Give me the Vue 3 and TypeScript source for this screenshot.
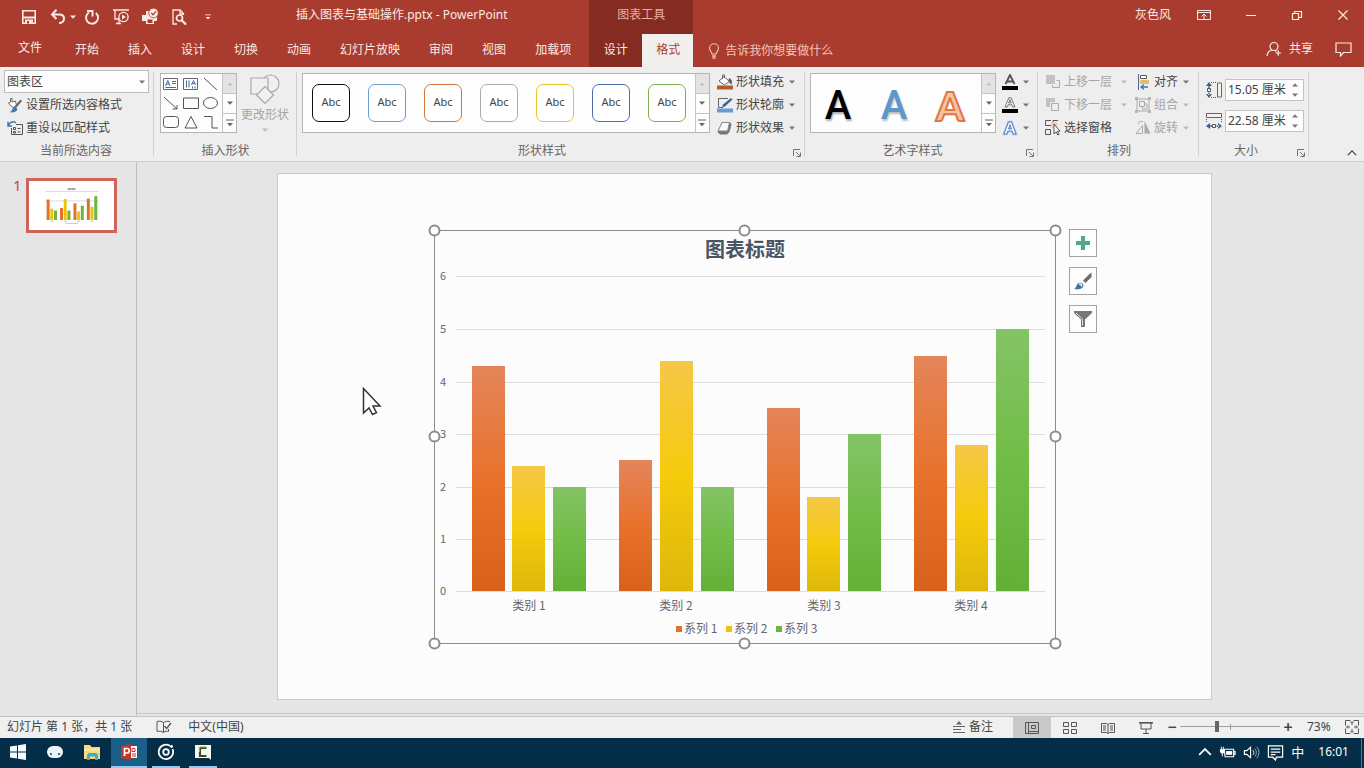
<script setup lang="ts">
import { computed, ref } from 'vue'

interface Series {
  name: string
  values: number[]
  fill: string
  swatch: string
}

const tabs = ['开始', '插入', '设计', '切换', '动画', '幻灯片放映', '审阅', '视图', '加载项']
const quickActions = [
  { id: 'save', label: '保存' },
  { id: 'undo', label: '撤消' },
  { id: 'redo', label: '恢复' },
  { id: 'present', label: '从头开始' },
  { id: 'print', label: '快速打印' },
  { id: 'preview', label: '打印预览' },
]
const shapes = ['textbox', 'vtextbox', 'line', 'arrow', 'rect', 'oval', 'rrect', 'triangle', 'elbow']
const outlines = ['black', 'blue', 'orange', 'gray', 'yellow', 'navy', 'green']
const shapeCommands = [
  { id: 'fill', label: '形状填充' },
  { id: 'outline', label: '形状轮廓' },
  { id: 'effect', label: '形状效果' },
]
const textCommands = [
  { id: 'textfill', label: '文本填充' },
  { id: 'textoutline', label: '文本轮廓' },
  { id: 'texteffect', label: '文本效果' },
]
const orderCommands = [
  { id: 'forward', label: '上移一层', off: true, caret: true },
  { id: 'backward', label: '下移一层', off: true, caret: true },
  { id: 'pane', label: '选择窗格', off: false, caret: false },
]
const alignCommands = [
  { id: 'align', label: '对齐', off: false },
  { id: 'group', label: '组合', off: true },
  { id: 'rotate', label: '旋转', off: true },
]
const views = [
  { id: 'normal', label: '普通视图' },
  { id: 'sorter', label: '幻灯片浏览' },
  { id: 'reading', label: '阅读视图' },
  { id: 'show', label: '幻灯片放映' },
]
const apps = [
  { id: 'windows', label: '开始', state: '' },
  { id: 'cloud', label: '网盘', state: '' },
  { id: 'folder', label: '文件资源管理器', state: '' },
  { id: 'ppt', label: 'PowerPoint', state: 'active' },
  { id: 'disc', label: '录音', state: 'running' },
  { id: 'camtasia', label: 'Camtasia', state: 'running' },
]
const tray = ['chevron', 'battery', 'speaker', 'notice']

const element = ref('图表区')
const shapeHeight = ref('15.05 厘米')
const shapeWidth = ref('22.58 厘米')
const zoom = ref(36)
const view = ref('normal')

const categories = ['类别 1', '类别 2', '类别 3', '类别 4']
const firstBar = 37.6
const groupPitch = 147.45
const barPitch = 40.8
const barWidth = 33
const baseline = 361
const unit = 52.4
const series: Series[] = [
  { name: '系列 1', values: [4.3, 2.5, 3.5, 4.5], fill: 'url(#g-orange)', swatch: '#e2702f' },
  { name: '系列 2', values: [2.4, 4.4, 1.8, 2.8], fill: 'url(#g-yellow)', swatch: '#ecc40c' },
  { name: '系列 3', values: [2, 2, 3, 5], fill: 'url(#g-green)', swatch: '#6cb540' },
]
const ticks = [0, 1, 2, 3, 4, 5, 6].map((value) => ({ value, y: Math.ceil(baseline - value * unit) - (value === 6 ? 1 : 0) }))
const bars = computed(() =>
  series.flatMap((s, n) =>
    s.values.map((v, i) => {
      const y = Math.ceil(baseline - v * unit)
      const x = Math.round(firstBar + i * groupPitch + n * barPitch)
      return { key: `${s.name}-${i}`, x, y, h: baseline - y, fill: s.fill, flat: s.swatch }
    }),
  ),
)
const labelX = (i: number) => Math.round(firstBar + i * groupPitch + 57)
const handles = [
  [0, 0], [310, 0], [621, 0], [0, 206], [621, 206], [0, 413], [310, 413], [621, 413],
]
</script>

<template>
  <svg class="sprite" aria-hidden="true">
    <linearGradient id="g-orange" x1="0" y1="0" x2="0" y2="1">
      <stop offset="0" stop-color="#e4855a" /><stop offset=".5" stop-color="#e8722c" /><stop offset="1" stop-color="#d8621b" />
    </linearGradient>
    <linearGradient id="g-yellow" x1="0" y1="0" x2="0" y2="1">
      <stop offset="0" stop-color="#f5c747" /><stop offset=".5" stop-color="#f5cb0c" /><stop offset="1" stop-color="#deb70b" />
    </linearGradient>
    <linearGradient id="g-green" x1="0" y1="0" x2="0" y2="1">
      <stop offset="0" stop-color="#84c366" /><stop offset=".5" stop-color="#72bd48" /><stop offset="1" stop-color="#63af37" />
    </linearGradient>

    <symbol id="i-save" viewBox="0 0 18 18"><path d="M2.800 2.800h12.400v12.400H2.800z" fill="none" stroke="currentColor" stroke-width="1.600" /><path d="M3 8.500h12v2H3zM5 11.500h8v4H5z" fill="currentColor" /><path d="M7 13h2v2.500H7z" fill="#a93c2e" /></symbol>
    <symbol id="i-undo" viewBox="0 0 18 18"><path d="M3 6.500h7c3 0 5 1.500 5 4s-2 4.500-5 4.500M7.500 1.800L3 6.500l4.500 4.500" fill="none" stroke="currentColor" stroke-width="2" /></symbol>
    <symbol id="i-redo" viewBox="0 0 18 18"><path d="M6 4.500A6 6 0 1 0 12.800 5M4 3h5.500v5.500" fill="none" stroke="currentColor" stroke-width="1.900" /></symbol>
    <symbol id="i-present" viewBox="0 0 18 18"><path d="M1 2h16M3 2v9h4M4 15.500h5M7 11v4" fill="none" stroke="currentColor" stroke-width="1.300" /><circle cx="11.500" cy="9" r="4.600" fill="none" stroke="currentColor" stroke-width="1.300" /><path d="M10 6.500l4 2.500-4 2.500z" fill="currentColor" /></symbol>
    <symbol id="i-print" viewBox="0 0 18 18"><path d="M1 7h4V3h4v4h7v6h-3v3H5v-3H1z" fill="currentColor" /><path d="M6.500 11.500h5V15h-5z" fill="#a93c2e" /><circle cx="12.500" cy="5" r="4.800" fill="currentColor" stroke="#a93c2e" stroke-width=".800" /><path d="M10.300 5l1.700 1.800 3-3.500" fill="none" stroke="#a93c2e" stroke-width="1.300" /></symbol>
    <symbol id="i-preview" viewBox="0 0 18 18"><path d="M7 16H3V2h7l3.500 3.500V7M10 2v4h3.500" fill="none" stroke="currentColor" stroke-width="1.300" /><circle cx="9.500" cy="10" r="3" fill="none" stroke="currentColor" stroke-width="1.700" /><path d="M11.500 12l4.500 4.500" stroke="currentColor" stroke-width="2.200" /></symbol>
    <symbol id="i-caret" viewBox="0 0 8 8"><path d="M1 2.500h6L4 5.800z" fill="currentColor" /></symbol>
    <symbol id="i-upcaret" viewBox="0 0 8 8"><path d="M1 5.500h6L4 2.200z" fill="currentColor" /></symbol>
    <symbol id="i-more" viewBox="0 0 8 8"><path d="M0 .5h8v1H0zM1 4h6L4 7.200z" fill="currentColor" /></symbol>
    <symbol id="i-launch" viewBox="0 0 8 8"><path d="M.5 7V.5H7M3 3l4 4M7.500 3.500v4h-4" fill="none" stroke="currentColor" /></symbol>
    <symbol id="i-bulb" viewBox="0 0 12 16"><path d="M4 11c0-2-2.500-3-2.500-5.700a4.500 4.500 0 0 1 9 0C10.500 8 8 9 8 11z" fill="none" stroke="currentColor" stroke-width="1.100" /><path d="M4 13h4M4.500 15h3" stroke="currentColor" stroke-width="1.300" /></symbol>
    <symbol id="i-ribbonopt" viewBox="0 0 14 12"><path d="M.5 1.500h13v9H.5zM.5 3.500h13M7 10V5.500M4.500 7.500L7 5l2.500 2.500" fill="none" stroke="currentColor" /></symbol>
    <symbol id="i-min" viewBox="0 0 12 12"><path d="M1 6.500h10" stroke="currentColor" /></symbol>
    <symbol id="i-restore" viewBox="0 0 12 12"><path d="M1.500 4.500h6v6h-6zM3.500 4.500v-2h7v6h-3" fill="none" stroke="currentColor" stroke-width="1.200" /></symbol>
    <symbol id="i-close" viewBox="0 0 12 12"><path d="M1.500 1.500l9 9M10.500 1.500l-9 9" stroke="currentColor" stroke-width="1.200" /></symbol>
    <symbol id="i-person" viewBox="0 0 16 16"><circle cx="8" cy="5.500" r="4" fill="none" stroke="currentColor" stroke-width="1.200" /><path d="M1 15c.5-3.500 2.500-5.500 5-6M9 9.500l1.500 1M9.500 12h5.500M12.300 9.300v5.500" fill="none" stroke="currentColor" stroke-width="1.200" /></symbol>
    <symbol id="i-comment" viewBox="0 0 17 15"><path d="M1 1h15v9.500H8.500L5.500 14v-3.500H1z" fill="none" stroke="currentColor" stroke-width="1.200" /></symbol>

    <symbol id="i-format" viewBox="0 0 16 16"><path d="M4.500 9.500L1.500 6l2-1V1.500h1.500V5l3.500-1 1 4.500-2.500 2z" fill="#fdfdfd" stroke="#666" /><path d="M13.500 2.500l1.500 1.500-6 7-2-1z" fill="#666" /><path d="M2.500 15c3 0 2.500-5 5.500-5l2.500 2C10 15 6 16 2.500 15z" fill="#3f7ab8" /></symbol>
    <symbol id="i-reset" viewBox="0 0 16 16"><path d="M4.500 8v6.500h11V4.500H9M6.500 7.500h2v2h-2zM6.500 11.500h2v1.500h-2zM10.500 8.500h3M10.500 12h3" fill="none" stroke="#555" /><path d="M1.500 6C2 2.500 6 .500 9 3M1 1.800V6h4" fill="none" stroke="#3f7ab8" stroke-width="1.500" /></symbol>

    <symbol id="i-textbox" viewBox="0 0 18 16"><path d="M1.500 2.500h14v11h-14z" fill="none" stroke="#666" /><path d="M3.500 10l2.300-5.500L8 10M4.300 8h3M10 5.500h4M10 7.500h4M3.500 11.500h10.500" fill="none" stroke="#456a98" /></symbol>
    <symbol id="i-vtextbox" viewBox="0 0 18 16"><path d="M1.500 2.500h14v11h-14z" fill="none" stroke="#666" /><path d="M9.500 9l2-4.500 2 4.500M10.300 7.500h2.500M4.500 4.500v7M7 4.500v7M10.500 10.500v2M13 10.500v2" fill="none" stroke="#456a98" /></symbol>
    <symbol id="i-line" viewBox="0 0 18 16"><path d="M2 2l13 12" stroke="#555" /></symbol>
    <symbol id="i-arrow" viewBox="0 0 18 16"><path d="M2 2l13 12M15 10v4h-4.500" fill="none" stroke="#555" /></symbol>
    <symbol id="i-rect" viewBox="0 0 18 16"><path d="M1.500 3h15v10.500h-15z" fill="none" stroke="#555" /></symbol>
    <symbol id="i-oval" viewBox="0 0 18 16"><ellipse cx="8.500" cy="8" rx="7" ry="5.500" fill="none" stroke="#555" /></symbol>
    <symbol id="i-rrect" viewBox="0 0 18 16"><rect x="1.500" y="2.500" width="15" height="11" rx="3" fill="none" stroke="#555" /></symbol>
    <symbol id="i-triangle" viewBox="0 0 18 16"><path d="M9 2.500l6 11.500H3z" fill="none" stroke="#555" /></symbol>
    <symbol id="i-elbow" viewBox="0 0 18 16"><path d="M2 2.500h8v11.500h6" fill="none" stroke="#555" /></symbol>
    <symbol id="i-change" viewBox="0 0 30 30"><g fill="#f0f0f0" stroke="#a9a9a9" stroke-width="1.200"><circle cx="20.500" cy="9.500" r="8.500" /><path d="M1 4h17v16H1z" /><path d="M15 12.500l8.500 8.500-8.500 8.500L6.500 21z" /></g></symbol>

    <symbol id="i-fill" viewBox="0 0 16 16"><path d="M7 2.500l5.500 5-5 3.500L2 7z" fill="#fff" stroke="#666" /><path d="M5.500 5V1h2v3" fill="none" stroke="#666" /><path d="M12 4.500c2.500.5 3 2.500 2.500 5.500-1.500-.5-2-2-2.500-3z" fill="#4b5f70" stroke="#555" stroke-width=".600" /><path d="M0 11.500h16v4H0z" fill="#b8592c" /></symbol>
    <symbol id="i-outline" viewBox="0 0 16 16"><path d="M11 1.500H1.500v9H6" fill="none" stroke="#666" /><path d="M14 1l1.500 1.500L8 9.500l-3 1 1-3z" fill="#44658a" /><path d="M0 11.500h16v4H0z" fill="#649bd2" /></symbol>
    <symbol id="i-effect" viewBox="0 0 16 16"><path d="M5 2h8l1.500 2.500-2 7.500-2.500 2.500H3L.500 12z" fill="#777" /><path d="M5 2.500h7.500l-2 8.500H1z" fill="#fafafa" stroke="#888" stroke-linejoin="round" /></symbol>
    <symbol id="i-textfill" viewBox="0 0 16 16"><path d="M3.500 10L8 1l4.500 9M5 7.500h6" fill="none" stroke="#555" stroke-width="1.900" /><path d="M0 12h16v4H0z" fill="#000" /></symbol>
    <symbol id="i-textoutline" viewBox="0 0 16 16"><path d="M3 10L6.800.8h2.400L13 10h-2.200l-.8-2.200H6L5.200 10zM6.600 6h2.800L8 2.500z" fill="#fff" stroke="#666" stroke-width=".900" /><path d="M0 12h16v4H0z" fill="#000" /></symbol>
    <symbol id="i-texteffect" viewBox="0 0 16 16"><path d="M2 14L6.500 2h3L14 14h-2.800l-1-3H5.800l-1 3zM6.500 9h3L8 4.500z" fill="#f7fbff" stroke="#9fc3ee" stroke-width="2.400" /><path d="M2 14L6.500 2h3L14 14h-2.800l-1-3H5.800l-1 3zM6.500 9h3L8 4.500z" fill="#fff" stroke="#4a78b5" stroke-width=".900" /></symbol>

    <symbol id="i-forward" viewBox="0 0 16 16"><path d="M1 1h9v9H1z" fill="#c2c2c2" /><path d="M11.500 6.500h3v7h-7V11" fill="none" stroke="#aaa" /></symbol>
    <symbol id="i-backward" viewBox="0 0 16 16"><path d="M1 1h9v4H5v5H1z" fill="#c2c2c2" /><path d="M6.500 6.500h7v7h-7z" fill="none" stroke="#aaa" /></symbol>
    <symbol id="i-pane" viewBox="0 0 16 16"><path d="M6 .5H.5v5H6M.5 9.500h5v5h-5zM8 6.500V.5h5" fill="none" stroke="#555" /><path d="M6 2h6v6H6z" fill="#f0d0bd" /><path d="M9 4v10l2.200-2.200 1.600 3.200 1.200-.8-1.500-3H15z" fill="#fff" stroke="#444" stroke-width=".900" /></symbol>
    <symbol id="i-align" viewBox="0 0 16 16"><path d="M3.500 0v16" stroke="#4b6a91" /><path d="M5.500 1.500h6v3h-6z" fill="#fff" stroke="#555" /><path d="M5 6h9v4H5z" fill="#e3bd74" /><path d="M13 13H6M9 10.500L6 13l3 2.500" fill="none" stroke="#3f74b8" stroke-width="1.300" /></symbol>
    <symbol id="i-group" viewBox="0 0 16 16"><path d="M2 2h12v12H2zM4.500 4.500h5v5h-5zM7.500 9.500v2.500h4.500V7H9.500" fill="none" stroke="#aaa" /><path d="M0 0h3v3H0zM13 0h3v3h-3zM0 13h3v3H0zM13 13h3v3h-3z" fill="#b5b5b5" /></symbol>
    <symbol id="i-rotate" viewBox="0 0 16 16"><path d="M9.500 1v12.500h6z" fill="#aaa" /><path d="M7.500 5.500v8H1zM3 4c1-2.500 3-3 5-2.500" fill="none" stroke="#aaa" /></symbol>
    <symbol id="i-height" viewBox="0 0 16 16"><path d="M11.500 1h4v14h-4z" fill="#f6f0ee" stroke="#666" /><path d="M5 .5h5M5 15.500h5" stroke="#555" stroke-dasharray="1 1" /><path d="M3 0l3 4H0zM3 16l3-4H0zM2.300 3h1.400v3H2.300zM2.300 10.500h1.400V13H2.300z" fill="#386494" /><path d="M1.500 6.500h3v3h-3z" fill="none" stroke="#555" /></symbol>
    <symbol id="i-width" viewBox="0 0 16 16"><path d="M.5.5h15v4H.5z" fill="#f6f0ee" stroke="#666" /><path d="M.5 6v4M15.500 6v4" stroke="#555" stroke-dasharray="1 1" /><path d="M0 13l4-3v6zM16 13l-4-3v6zM3 12.300h3v1.400H3zM10.500 12.300H13v1.400h-2.500z" fill="#386494" /><path d="M6.500 11.500h3v3h-3z" fill="none" stroke="#555" /></symbol>
    <symbol id="i-chevron" viewBox="0 0 12 12"><path d="M1 8.500l5-5 5 5" fill="none" stroke="currentColor" stroke-width="1.500" /></symbol>

    <symbol id="i-plus" viewBox="0 0 18 18"><path d="M7 2h4v5h5v4h-5v5H7v-5H2V7h5z" fill="#52a787" /></symbol>
    <symbol id="i-brush" viewBox="0 0 18 18"><path d="M17.500.5V5l-6 6-2.500-2.500 6-6z" fill="#6d6d6d" /><path d="M0 17c2-.5 2-3 3.500-5 2-2.500 6-1 6 1.500C9.500 16.500 5 18 0 17z" fill="#41739f" /><path d="M5 12.500c1.500-1 3 0 2.500 2" fill="none" stroke="#fff" stroke-width="1.500" /></symbol>
    <symbol id="i-funnel" viewBox="0 0 18 18"><path d="M0 1h18v2l-7 6.500V17H7V9.500L0 3z" fill="#777" /><path d="M2 3l6.500 6v6.500" fill="none" stroke="#ddd" /></symbol>

    <symbol id="i-spell" viewBox="0 0 16 14"><path d="M7.500 12.500C5.500 11 3 11 1 11.500V1.500c2-.5 4.500-.5 6.500 1 1.500-1 3.500-1.500 6.500-1M7.500 2.500v10M7.500 12.500C9 11 11 11 12.500 11.500V9" fill="none" stroke="#555" /><path d="M8.500 6l2.200 2.500L15 3" fill="none" stroke="#555" stroke-width="1.300" /></symbol>
    <symbol id="i-notes" viewBox="0 0 12 12"><path d="M0 5.500h12M0 8.500h8M0 11.500h12" stroke="#666" /><path d="M6 0l3 3.500H3z" fill="#666" /></symbol>
    <symbol id="i-normal" viewBox="0 0 14 12"><path d="M.5.5h13v11H.5zM3.500.5v11M3.500 9.500h10M6.500 3.500h4v3h-4z" fill="none" stroke="#555" /></symbol>
    <symbol id="i-sorter" viewBox="0 0 14 12"><path d="M.5.5h5v4h-5zM8.500.5h5v4h-5zM.5 7.500h5v4h-5zM8.500 7.500h5v4h-5z" fill="none" stroke="#555" /></symbol>
    <symbol id="i-reading" viewBox="0 0 14 12"><path d="M.5 1.500h5l1.500 1 1.500-1h5v9h-5L7 11.500l-1.500-1h-5zM7 2.500v9M2 4h3M2 6h3M2 8h3M9 4h3M9 6h3M9 8h3" fill="none" stroke="#555" /></symbol>
    <symbol id="i-show" viewBox="0 0 14 12"><path d="M0 .8h14" stroke="#555" stroke-width="1.600" /><path d="M2 1v6h10V1M7 7v4M4 11.500h6" fill="none" stroke="#555" /></symbol>
    <symbol id="i-fit" viewBox="0 0 14 14"><path d="M.5 5.500v-5h5M8.500.5h5v5M13.500 8.500v5h-5M5.500 13.500h-5v-5M7 2v3M7 9v3M2 7h3M9 7h3M5.500 3L7 1.500 8.500 3M5.500 11L7 12.500 8.500 11M3 5.500L1.500 7 3 8.500M11 5.500L12.500 7 11 8.500" fill="none" stroke="#555" /></symbol>

    <symbol id="i-windows" viewBox="0 0 18 18"><path d="M1 3.500l7-1v6H1zM9 2.300L17 1v7.500H9zM1 9.500h7v6l-7-1zM9 9.500h8V17l-8-1.300z" fill="#f4fbff" /></symbol>
    <symbol id="i-cloud" viewBox="0 0 18 18"><rect x="1" y="3" width="16" height="12" rx="6" fill="#eef5fa" /><circle cx="5" cy="11" r="1" fill="#123a55" /><circle cx="13" cy="11" r="1" fill="#123a55" /></symbol>
    <symbol id="i-folder" viewBox="0 0 18 18"><path d="M1 2h6l1.500 2H17v12H1z" fill="#f3da86" /><path d="M1 6h16v1.500H1z" fill="#fbeab0" /><path d="M4 17v-5l1.500-2h8l1.500 2v5h-3v-3.500H7V17z" fill="#39b3c4" /></symbol>
    <symbol id="i-ppt" viewBox="0 0 18 18"><path d="M10 3h7v12h-7z" fill="#fff" /><path d="M1 3l10-2v16L1 15z" fill="#c8352b" /><path d="M4.500 13V5.500H7a2 2 0 0 1 0 4.500H4.500" fill="none" stroke="#fff" stroke-width="1.700" /><path d="M12 5.500h3v3h-3zM12 11h4M12 13h4" fill="none" stroke="#c8352b" /></symbol>
    <symbol id="i-disc" viewBox="0 0 18 18"><path d="M13 3a7.200 7.200 0 1 0 2.500 3" fill="none" stroke="#fff" stroke-width="1.800" /><circle cx="9" cy="9" r="2.800" fill="none" stroke="#fff" stroke-width="1.800" /><circle cx="14.500" cy="3.500" r="1.400" fill="#fff" /></symbol>
    <symbol id="i-camtasia" viewBox="0 0 18 18"><path d="M1 2h16v15l-2-2H1z" fill="#f7fbf2" /><path d="M12.500 5H6v8h6.500" fill="none" stroke="#3f4b27" stroke-width="2.200" /><path d="M12.500 4H6M5.500 4v5" fill="none" stroke="#8bb03d" stroke-width="1" /></symbol>
    <symbol id="i-battery" viewBox="0 0 18 18"><path d="M5.500 5.500h10v8h-9zM15.500 8h1.500v3h-1.500" fill="none" stroke="#fff" stroke-width="1.200" /><path d="M7.500 7.500h6.500v4H7.500z" fill="#fff" /><path d="M1 5.500h5v3L4.500 10h-2L1 8.500zM2 3h1v3H2zM4 3h1v3H4zM3 10h1v3H3z" fill="#fff" /></symbol>
    <symbol id="i-speaker" viewBox="0 0 18 18"><path d="M1.500 7h2.500l4-3.500v11L4 11H1.500z" fill="none" stroke="#fff" stroke-width="1.200" /><path d="M10.500 6.500c1.300 1.500 1.300 3.500 0 5" fill="none" stroke="#fff" /><path d="M12.500 4.800c2.200 2.500 2.200 6 0 8.500M14.500 3c3.200 3.500 3.200 8.500 0 12" fill="none" stroke="#9db2c0" /></symbol>
    <symbol id="i-notice" viewBox="0 0 18 18"><path d="M1.500 2h15v12H10l-1 3-3-3H1.500zM4 5.500h10M4 8.500h10M4 11.300h5" fill="none" stroke="#fff" stroke-width="1.300" /></symbol>
  </svg>

  <div class="window">
    <header class="top">
      <div class="left">
        <div class="titlebar">
          <div class="quick">
            <template v-for="q in quickActions" :key="q.id">
              <button class="plain" :class="q.id" :aria-label="q.label"><svg class="s18"><use :href="'#i-' + q.id" /></svg></button>
              <button v-if="q.id === 'undo'" class="plain drop" aria-label="撤消列表"><svg class="s8"><use href="#i-caret" /></svg></button>
            </template>
            <button class="plain more" aria-label="自定义快速访问工具栏"><svg class="s6"><use href="#i-more" /></svg></button>
          </div>
          <h1 class="title">插入图表与基础操作.pptx - PowerPoint</h1>
        </div>
        <nav class="tabs">
          <button class="tab file">文件</button>
          <button v-for="t in tabs" :key="t" class="tab">{{ t }}</button>
        </nav>
      </div>
      <div class="context">
        <div class="context-name">图表工具</div>
        <nav class="context-tabs">
          <button class="tab">设计</button>
          <button class="tab current">格式</button>
        </nav>
      </div>
      <div class="right">
        <div class="controls">
          <span class="user">灰色风</span>
          <button class="plain" aria-label="功能区显示选项"><svg class="w14"><use href="#i-ribbonopt" /></svg></button>
          <button class="plain" aria-label="最小化"><svg class="s12"><use href="#i-min" /></svg></button>
          <button class="plain" aria-label="向下还原"><svg class="s12"><use href="#i-restore" /></svg></button>
          <button class="plain" aria-label="关闭"><svg class="s12"><use href="#i-close" /></svg></button>
        </div>
        <div class="assist">
          <button class="plain tell"><svg class="bulb"><use href="#i-bulb" /></svg>告诉我你想要做什么</button>
          <button class="plain share"><svg class="s16"><use href="#i-person" /></svg>共享</button>
          <button class="plain" aria-label="批注"><svg class="comment"><use href="#i-comment" /></svg></button>
        </div>
      </div>
    </header>

    <section class="ribbon">
      <div class="group selection">
        <div class="body column">
          <div class="select-wrap">
            <select v-model="element" aria-label="图表元素">
              <option>图表区</option>
              <option>图表标题</option>
            </select>
            <svg class="s8 arrow"><use href="#i-caret" /></svg>
          </div>
          <button class="cmd"><svg class="s16"><use href="#i-format" /></svg>设置所选内容格式</button>
          <button class="cmd"><svg class="s16"><use href="#i-reset" /></svg>重设以匹配样式</button>
        </div>
        <div class="caption">当前所选内容</div>
      </div>

      <div class="group insert">
        <div class="body">
          <div class="gallery">
            <div class="shapes">
              <button v-for="s in shapes" :key="s" class="plain" :aria-label="s"><svg class="shape"><use :href="'#i-' + s" /></svg></button>
            </div>
            <div class="scroll">
              <button disabled aria-label="上一行"><svg class="s6"><use href="#i-upcaret" /></svg></button>
              <button aria-label="下一行"><svg class="s8"><use href="#i-caret" /></svg></button>
              <button aria-label="其他"><svg class="s8"><use href="#i-more" /></svg></button>
            </div>
          </div>
          <button class="big" disabled><svg class="s30"><use href="#i-change" /></svg>更改形状<svg class="s8"><use href="#i-caret" /></svg></button>
        </div>
        <div class="caption">插入形状</div>
      </div>

      <div class="group styles">
        <div class="body">
          <div class="gallery wide">
            <div class="swatches">
              <button v-for="o in outlines" :key="o" class="swatch" :class="o">Abc</button>
            </div>
            <div class="scroll">
              <button disabled aria-label="上一行"><svg class="s6"><use href="#i-upcaret" /></svg></button>
              <button aria-label="下一行"><svg class="s8"><use href="#i-caret" /></svg></button>
              <button aria-label="其他"><svg class="s8"><use href="#i-more" /></svg></button>
            </div>
          </div>
          <div class="column">
            <button v-for="c in shapeCommands" :key="c.id" class="cmd"><svg class="s16"><use :href="'#i-' + c.id" /></svg>{{ c.label }}<svg class="s8 dd"><use href="#i-caret" /></svg></button>
          </div>
        </div>
        <div class="caption inset">形状样式</div>
        <button class="plain launch" aria-label="设置形状格式"><svg class="s8"><use href="#i-launch" /></svg></button>
      </div>

      <div class="group wordart">
        <div class="body">
          <div class="gallery">
            <div class="letters">
              <button class="plain letter black">A</button>
              <button class="plain letter blue">A</button>
              <button class="plain letter orange">A</button>
            </div>
            <div class="scroll">
              <button disabled aria-label="上一行"><svg class="s6"><use href="#i-upcaret" /></svg></button>
              <button aria-label="下一行"><svg class="s8"><use href="#i-caret" /></svg></button>
              <button aria-label="其他"><svg class="s8"><use href="#i-more" /></svg></button>
            </div>
          </div>
          <div class="column">
            <button v-for="c in textCommands" :key="c.id" class="cmd" :aria-label="c.label"><svg class="s16"><use :href="'#i-' + c.id" /></svg><svg class="s8 dd"><use href="#i-caret" /></svg></button>
          </div>
        </div>
        <div class="caption inset">艺术字样式</div>
        <button class="plain launch" aria-label="设置文本效果格式"><svg class="s8"><use href="#i-launch" /></svg></button>
      </div>

      <div class="group arrange">
        <div class="body">
          <div class="column">
            <button v-for="c in orderCommands" :key="c.id" class="cmd" :disabled="c.off"><svg class="s16"><use :href="'#i-' + c.id" /></svg>{{ c.label }}<svg v-if="c.caret" class="s8 far"><use href="#i-caret" /></svg></button>
          </div>
          <div class="column">
            <button v-for="c in alignCommands" :key="c.id" class="cmd" :disabled="c.off"><svg class="s16"><use :href="'#i-' + c.id" /></svg>{{ c.label }}<svg class="s8 near"><use href="#i-caret" /></svg></button>
          </div>
        </div>
        <div class="caption">排列</div>
      </div>

      <div class="group size">
        <div class="body column">
          <div class="measure">
            <label for="shape-height" aria-label="高度"><svg class="s16"><use href="#i-height" /></svg></label>
            <div class="spin">
              <input id="shape-height" v-model="shapeHeight" type="text" />
              <div class="steps">
                <button class="plain" aria-label="增加高度"><svg class="s8"><use href="#i-upcaret" /></svg></button>
                <button class="plain" aria-label="减少高度"><svg class="s8"><use href="#i-caret" /></svg></button>
              </div>
            </div>
          </div>
          <div class="measure">
            <label for="shape-width" aria-label="宽度"><svg class="s16"><use href="#i-width" /></svg></label>
            <div class="spin">
              <input id="shape-width" v-model="shapeWidth" type="text" />
              <div class="steps">
                <button class="plain" aria-label="增加宽度"><svg class="s8"><use href="#i-upcaret" /></svg></button>
                <button class="plain" aria-label="减少宽度"><svg class="s8"><use href="#i-caret" /></svg></button>
              </div>
            </div>
          </div>
        </div>
        <div class="caption inset">大小</div>
        <button class="plain launch" aria-label="大小和位置"><svg class="s8"><use href="#i-launch" /></svg></button>
      </div>
      <div class="collapse">
        <button class="plain" aria-label="折叠功能区"><svg class="s10"><use href="#i-chevron" /></svg></button>
      </div>
    </section>

    <main class="work">
      <aside class="slides">
        <span class="number">1</span>
        <button class="thumb" aria-label="幻灯片 1">
          <svg viewBox="0 0 935 527">
            <path d="M178 103h589M178 208h589" stroke="#bbb" stroke-width="6" />
            <path d="M426 76h84" stroke="#777" stroke-width="16" stroke-dasharray="18 4" />
            <rect v-for="b in bars" :key="b.key" :x="b.x + 156" :y="b.y + 57" width="33" :height="b.h" :fill="b.flat" />
            <path d="M235 432h34M382 432h34M530 432h34M677 432h34M400 455h140" stroke="#aaa" stroke-width="8" />
          </svg>
        </button>
      </aside>
      <div class="canvas">
        <div class="slide">
          <svg class="chart" viewBox="0 0 622 414" width="622" height="414" role="img" aria-label="图表标题">
            <rect class="frame" x="0.500" y="0.500" width="621" height="413" />
            <text class="chart-title" x="311" y="27">图表标题</text>
            <g v-for="t in ticks" :key="t.value">
              <line class="grid" x1="22" :y1="t.y + 0.5" x2="611" :y2="t.y + 0.5" />
              <text class="tick" x="9" :y="t.y + 4">{{ t.value }}</text>
            </g>
            <rect v-for="b in bars" :key="b.key" :x="b.x" :y="b.y" :width="barWidth" :height="b.h" :fill="b.fill" />
            <text v-for="(c, i) in categories" :key="c" class="label" :x="labelX(i)" y="380">{{ c }}</text>
            <g v-for="(s, i) in series" :key="s.name">
              <rect :x="242 + i * 50" y="396" width="6" height="6" :fill="s.swatch" />
              <text class="legend" :x="250 + i * 50" y="403">{{ s.name }}</text>
            </g>
            <circle v-for="(h, i) in handles" :key="i" class="handle" :cx="h[0] + 0.5" :cy="h[1] + 0.5" r="5" />
          </svg>
          <div class="tools">
            <button aria-label="图表元素"><svg class="s18"><use href="#i-plus" /></svg></button>
            <button aria-label="图表样式"><svg class="s18"><use href="#i-brush" /></svg></button>
            <button aria-label="图表筛选器"><svg class="s18"><use href="#i-funnel" /></svg></button>
          </div>
          <svg class="pointer" viewBox="0 0 20 30" width="20" height="30"><path d="M1.500 1.500V26l5.500-5 3.500 6.500 4-1.800-3.500-6.700h7z" fill="#fff" stroke="#333" stroke-width="1.500" /></svg>
        </div>
      </div>
    </main>

    <footer class="status">
      <span>幻灯片 第 1 张，共 1 张</span>
      <button class="plain spell" aria-label="拼写检查"><svg><use href="#i-spell" /></svg></button>
      <span class="lang">中文(中国)</span>
      <button class="plain notes"><svg class="s12"><use href="#i-notes" /></svg>备注</button>
      <button v-for="v in views" :key="v.id" class="plain view" :class="{ on: view === v.id }" :aria-label="v.label" @click="view = v.id"><svg class="w14"><use :href="'#i-' + v.id" /></svg></button>
      <button class="plain step">−</button>
      <input v-model="zoom" class="zoom" type="range" min="0" max="100" aria-label="缩放" />
      <button class="plain step">+</button>
      <span class="percent">73%</span>
      <button class="plain fit" aria-label="适应窗口"><svg><use href="#i-fit" /></svg></button>
    </footer>

    <footer class="taskbar">
      <button v-for="a in apps" :key="a.id" class="plain app" :class="[a.id, a.state]" :aria-label="a.label"><svg class="s18"><use :href="'#i-' + a.id" /></svg></button>
      <div class="tray">
        <button v-for="t in tray" :key="t" class="plain" :class="t" :aria-label="t"><svg><use :href="'#i-' + t" /></svg></button>
        <span class="ime">中</span>
        <time>16:01</time>
      </div>
      <button class="plain desktop" aria-label="显示桌面"></button>
    </footer>
  </div>
</template>

<style>
body {
  background: #e5e5e5;
}
</style>

<style scoped>
.sprite {
  position: absolute;
  width: 0;
  height: 0;
}
.window {
  display: flex;
  flex-direction: column;
  height: 100vh;
  overflow: hidden;
  font-family: "Noto Sans", "Noto Sans CJK SC", sans-serif;
  font-size: 12px;
  line-height: 16px;
  color: #444;
  white-space: nowrap;
}
button,
input,
select {
  font: inherit;
  color: inherit;
}
svg {
  display: block;
  flex: none;
}
.plain {
  display: flex;
  align-items: center;
  justify-content: center;
  padding: 0;
  border: 0;
  background: none;
}
.s6 { width: 6px; height: 6px; }
.s8 { width: 8px; height: 8px; }
.s10 { width: 10px; height: 10px; }
.s12 { width: 12px; height: 12px; }
.s16 { width: 16px; height: 16px; }
.s18 { width: 18px; height: 18px; }
.s30 { width: 30px; height: 30px; }
.w14 { width: 14px; height: 12px; }

.top {
  display: flex;
  flex: none;
  background: #a93c2e;
  color: #fbe9e4;
}
.left {
  padding-right: 4px;
}
.titlebar {
  display: flex;
  align-items: center;
  height: 34px;
}
.quick {
  display: flex;
  align-items: center;
  gap: 11px;
  width: 276px;
  padding-left: 20px;
}
.quick .undo {
  margin-right: -9px;
}
.quick .drop {
  margin-right: -5px;
}
.quick .more {
  margin-left: 6px;
}
.title {
  margin: 0;
  padding-bottom: 4px;
  font-size: 12px;
  font-weight: 400;
}
.tabs {
  display: flex;
  gap: 1px;
}
.tab {
  height: 33px;
  padding: 0 14px 2px;
  border: 0;
  background: none;
}
.tab.file {
  width: 60px;
  padding-bottom: 5px;
}
.context {
  background: #852b22;
}
.context-name {
  height: 34px;
  line-height: 30px;
  text-align: center;
  color: #e9aca2;
}
.context-tabs {
  display: flex;
}
.context-tabs .tab {
  width: 53px;
}
.context-tabs .tab.current {
  width: 51px;
  background: #f1efee;
  color: #b0402f;
}
.right {
  display: flex;
  flex: 1;
  flex-direction: column;
}
.controls {
  display: flex;
  align-items: center;
  justify-content: flex-end;
  height: 34px;
  padding: 0 15px 4px 0;
  box-sizing: border-box;
  gap: 34px;
}
.user {
  margin-right: -8px;
}
.assist {
  display: flex;
  align-items: center;
  box-sizing: border-box;
  height: 33px;
  padding: 0 12px 3px 15px;
}
.tell {
  gap: 5px;
  margin-right: auto;
  padding-top: 3px;
  color: #f3c5bb;
}
.bulb {
  width: 12px;
  height: 16px;
}
.share {
  gap: 7px;
  margin-right: 22px;
}
.comment {
  width: 17px;
  height: 15px;
}

.ribbon {
  display: flex;
  flex: none;
  height: 94px;
  border-bottom: 1px solid #cfcfcf;
  background: #eee;
}
.group {
  position: relative;
  display: flex;
  flex: none;
  flex-direction: column;
  box-sizing: border-box;
  padding-top: 3px;
}
.group::after {
  content: "";
  position: absolute;
  top: 5px;
  right: 0;
  bottom: 5px;
  width: 1px;
  background: #d0d0d0;
}
.body {
  display: flex;
  flex: none;
  height: 69px;
}
.column {
  display: flex;
  flex-direction: column;
}
.caption {
  margin-left: -6px;
  padding-top: 4px;
  text-align: center;
  color: #666;
}
.caption.inset {
  padding-right: 17px;
}
.launch {
  position: absolute;
  right: 3px;
  bottom: 3px;
  width: 10px;
  height: 10px;
  color: #777;
}
.selection { width: 154px; padding-left: 4px; }
.insert { width: 143px; padding-left: 6px; }
.styles { flex: 1; padding-left: 5px; }
.wordart { width: 233px; padding-left: 5px; }
.arrange { width: 161px; padding-left: 7px; }
.size { width: 110px; padding-left: 7px; }
.select-wrap {
  position: relative;
  width: 145px;
  height: 23px;
}
select {
  width: 100%;
  height: 23px;
  padding: 0 2px;
  appearance: none;
  border: 1px solid #bcbcbc;
  border-radius: 0;
  background: #fdfdfd;
}
.arrow {
  position: absolute;
  top: 8px;
  right: 3px;
  color: #777;
  pointer-events: none;
}
.cmd {
  display: flex;
  align-items: center;
  gap: 3px;
  height: 23px;
  padding: 0;
  border: 0;
  background: none;
}
.selection .cmd {
  padding-left: 3px;
}
.cmd .s8,
.steps .s8 {
  color: #777;
}
.cmd:disabled,
.big:disabled {
  color: #a6a6a6;
}
.cmd:disabled .s8,
.big .s8 {
  color: #bbb;
}
.dd {
  margin-left: 1px;
}
.far {
  margin-left: 5px;
}
.near {
  margin-left: 1px;
}
.gallery {
  display: flex;
  box-sizing: border-box;
  height: 60px;
  margin-top: 3px;
  border: 1px solid #b5b5b5;
  background: #fdfdfd;
}
.gallery.wide {
  flex: 1;
}
.shapes {
  display: grid;
  grid-template-columns: repeat(3, 20px);
  width: 61px;
}
.shape {
  width: 18px;
  height: 16px;
}
.scroll {
  display: grid;
  grid-template-rows: repeat(3, 1fr);
  width: 13px;
  border-left: 1px solid #c4c4c4;
}
.scroll button {
  display: flex;
  align-items: center;
  justify-content: center;
  padding: 0;
  border: 0;
  background: none;
  color: #666;
}
.scroll button + button {
  border-top: 1px solid #c4c4c4;
}
.scroll button:disabled {
  background: #e3e3e3;
  color: #b8b8b8;
}
.big {
  display: flex;
  flex-direction: column;
  align-items: center;
  padding: 4px 0 0 4px;
  border: 0;
  background: none;
}
.big .s30 {
  margin-bottom: 3px;
}
.big .s8 {
  margin-top: 3px;
}
.swatches {
  display: flex;
  flex: 1;
  align-items: center;
  gap: 18px;
  padding-left: 9px;
}
.swatch {
  width: 38px;
  height: 38px;
  padding: 0 0 3px;
  border: 1px solid;
  border-radius: 7px;
  background: #fff;
  font-size: 11px;
}
.swatch.black { border-color: #111; }
.swatch.blue { border-color: #6d9dca; }
.swatch.orange { border-color: #d5743d; }
.swatch.gray { border-color: #aaa; }
.swatch.yellow { border-color: #e6c628; }
.swatch.navy { border-color: #4b6da9; }
.swatch.green { border-color: #7dae55; }
.styles .column {
  padding: 0 9px 0 7px;
}
.letters {
  display: grid;
  grid-template-columns: repeat(3, 56px);
  width: 170px;
}
.letter {
  padding: 6px 2px 0 0;
  font-family: Roboto, sans-serif;
  font-size: 40px;
  line-height: 40px;
  font-weight: 500;
}
.letter.black {
  color: #000;
  text-shadow: 1px 2px 2px #aaa;
}
.letter.blue {
  color: #5b97cb;
  text-shadow: 1px 2px 2px #bbb;
}
.letter.orange {
  font-family: Lato, sans-serif;
  color: #f7c3a5;
  font-weight: 900;
  -webkit-text-stroke: 2px #e07640;
}
.wordart .column {
  padding-left: 6px;
}
.arrange .column + .column {
  padding-left: 7px;
}
.size .body {
  gap: 9px;
  box-sizing: border-box;
  padding-top: 9px;
}
.measure {
  display: flex;
  align-items: center;
  gap: 3px;
}
.spin {
  display: flex;
  box-sizing: border-box;
  width: 79px;
  height: 22px;
  border: 1px solid #c3c3c3;
  background: #fdfdfd;
}
.spin input {
  flex: 1;
  min-width: 0;
  padding: 0 0 0 2px;
  border: 0;
  background: none;
}
.steps {
  display: grid;
  grid-template-rows: 1fr 1fr;
  width: 16px;
}
.collapse {
  display: flex;
  width: 55px;
  align-items: flex-end;
  justify-content: flex-end;
  padding: 0 7px 3px 0;
  box-sizing: border-box;
}

.work {
  display: flex;
  flex: 1;
  min-height: 0;
}
.slides {
  display: flex;
  flex: none;
  box-sizing: border-box;
  width: 137px;
  padding: 16px 0 0 13px;
  border-right: 1px solid #bdbdbd;
}
.number {
  width: 13px;
  font-size: 15px;
  line-height: 14px;
  color: #c4473a;
}
.thumb {
  width: 91px;
  height: 55px;
  padding: 0;
  border: 3px solid #cf655a;
  background: #fff;
}
.canvas {
  display: flex;
  flex: 1;
  justify-content: center;
  min-width: 0;
  margin-bottom: 2px;
  padding: 11px 12px 13px 0;
  border-bottom: 1px solid #c6c6c6;
}
.slide {
  position: relative;
  box-sizing: border-box;
  height: 100%;
  aspect-ratio: 935 / 527;
  border: 1px solid #c9c9c9;
  background: #fcfcfc;
}
.chart {
  position: absolute;
  left: 156px;
  top: 56px;
  overflow: visible;
}
.frame {
  fill: none;
  stroke: #8c8c8c;
}
.handle {
  fill: #fff;
  stroke: #8c8c8c;
  stroke-width: 2;
}
.grid {
  stroke: #dcdcdc;
}
.chart-title {
  font-size: 20px;
  font-weight: 700;
  fill: #4a5462;
  text-anchor: middle;
}
.tick,
.label,
.legend {
  font-family: "Noto Sans CJK SC", sans-serif;
  font-size: 12px;
  fill: #66666e;
}
.tick,
.label {
  text-anchor: middle;
}
.tick {
  font-size: 11px;
}
.tools {
  position: absolute;
  left: 791px;
  top: 55px;
  display: grid;
  gap: 10px;
}
.tools button {
  display: flex;
  align-items: center;
  justify-content: center;
  width: 28px;
  height: 28px;
  padding: 0;
  border: 1px solid #a3a3a3;
  background: #fdfdfd;
}
.pointer {
  position: absolute;
  left: 84px;
  top: 213px;
}

.status {
  display: flex;
  flex: none;
  align-items: center;
  box-sizing: border-box;
  height: 22px;
  padding: 0 5px 2px 7px;
  border-top: 1px solid #c3c3c3;
  background: #f0f0f0;
}
.spell {
  margin: 0 16px 0 24px;
}
.spell svg {
  width: 16px;
  height: 14px;
}
.notes {
  gap: 4px;
  margin-left: auto;
  margin-right: 20px;
}
.view {
  align-self: flex-start;
  width: 38px;
  height: 21px;
}
.view.on {
  background: #cacaca;
}
.step {
  width: 14px;
  font-size: 16px;
  font-weight: 600;
}
.zoom {
  width: 100px;
  height: 16px;
  margin: 0 1px;
  appearance: none;
  background: linear-gradient(#a0a0a0, #a0a0a0) center / 100% 1px no-repeat, linear-gradient(#a0a0a0, #a0a0a0) center / 1px 6px no-repeat;
}
.zoom::-webkit-slider-thumb {
  width: 4px;
  height: 11px;
  appearance: none;
  background: #666;
}
.percent {
  width: 36px;
  margin-left: 12px;
}
.fit {
  margin-left: 2px;
}
.fit svg {
  width: 14px;
  height: 14px;
}

.taskbar {
  display: flex;
  flex: none;
  gap: 1px;
  height: 30px;
  background: #042e47;
  color: #fff;
}
.app {
  box-sizing: border-box;
  width: 36px;
  border-bottom: 2px solid transparent;
}
.app.active {
  border-color: #8fcbf5;
  background: #1b5f86;
}
.app.running {
  width: 28px;
  margin-left: 4px;
  margin-right: 4px;
  border-color: #8fcbf5;
}
.tray {
  display: flex;
  align-items: center;
  gap: 7px;
  margin-left: auto;
  padding-bottom: 2px;
}
.tray svg {
  width: 17px;
  height: 17px;
}
.tray .chevron svg {
  width: 14px;
  height: 14px;
}
.ime {
  font-size: 13px;
}
time {
  margin-left: 7px;
}
.desktop {
  width: 3px;
  margin-left: 11px;
  border-left: 1px solid #55768a;
}
</style>
